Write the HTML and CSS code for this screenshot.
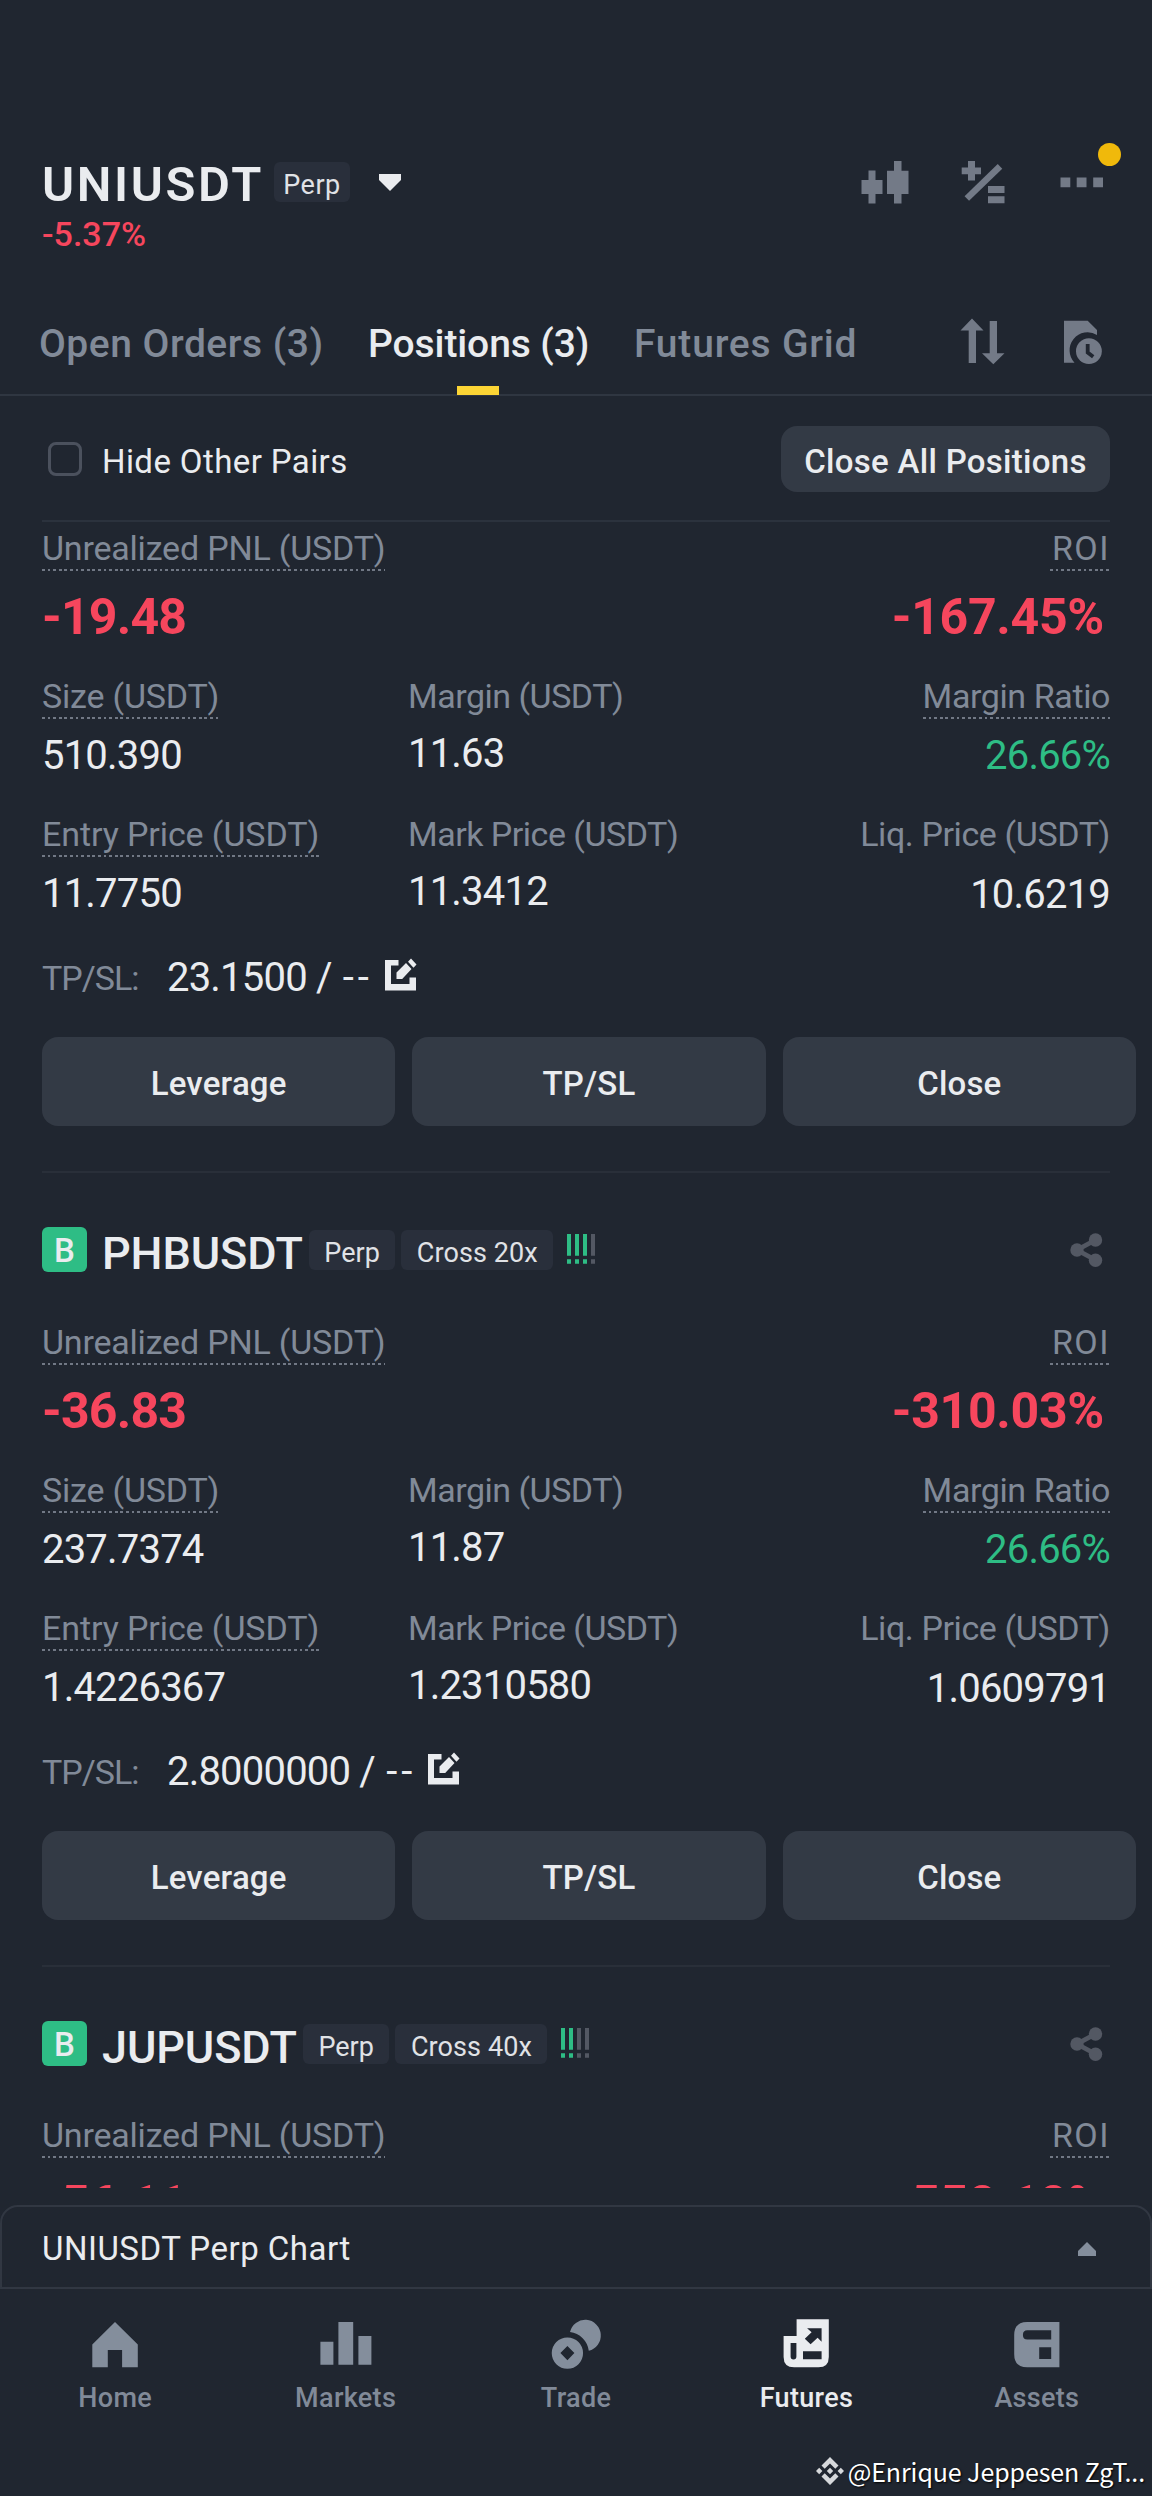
FILE: index.html
```html
<!DOCTYPE html>
<html lang="en">
<head>
<meta charset="utf-8">
<title>UNIUSDT Perp – Positions</title>
<link rel="stylesheet" href="styles.css">
</head>
<body>
<main class="app">
  <header class="header">
    <div class="pair-row">
      <h1 class="pair">UNIUSDT</h1>
      <span class="tag tag-top">Perp</span>
      <svg class="caret" width="22" height="17" viewBox="0 0 22 17"><path d="M0 0H22V6L11 17L0 6Z" fill="#eaecef"/></svg>
      <div class="header-icons">
        <svg width="48" height="44" viewBox="861 160 48 44" fill="#737a87"><path d="M868.5 170.5h7V180h7v14h-7v9.500h-7V194h-7v-14h7zM894 161h7.500v9.700h7V194h-7v9.500H894V194h-7v-23.300h7z"/></svg>
        <svg width="44" height="44" viewBox="961 160 44 44" fill="#737a87"><path d="M968 161h7v6.500h6v6.700h-6v6.300h-7v-6.300h-6.300v-6.700h6.300zM988 186h16.500v7H988zM988 196.300h16.500v7H988z"/><path d="M966.800 198.500L1000 166.300" stroke="#737a87" stroke-width="6.500"/></svg>
        <svg width="44" height="44" viewBox="1060 160 44 44" fill="#737a87"><path d="M1060.500 177.500h9.800v9.700h-9.800zM1076.700 177.500h9.800v9.700h-9.800zM1093.200 177.500h9.800v9.700h-9.800z"/></svg>
        <i class="notice"></i>
      </div>
    </div>
    <p class="change">-5.37%</p>
  </header>

  <nav class="tabs">
    <a class="tab tab-orders">Open Orders (3)</a>
    <a class="tab tab-active">Positions (3)</a>
    <a class="tab tab-grid">Futures Grid</a>
    <div class="tab-icons">
      <svg width="45" height="46" viewBox="960 318 45 46" fill="#737a87"><path d="M972 318.500L983.500 330.500H976V363h-7.300V330.500H960.500zM989.700 321h7.300v32.300h7.500L993.300 364.200L982 353.300h7.700z"/></svg>
      <svg width="39" height="46" viewBox="1063 318 39 46" fill="#737a87"><path d="M1064 320.700h23.700L1097 330v5A18 18 0 0 0 1074.500 362.700H1064z"/><circle cx="1088.900" cy="351.200" r="12.900"/><path d="M1087.700 344v8.500l5.500 4.200" fill="none" stroke="#202630" stroke-width="3.800"/></svg>
    </div>
  </nav>

  <section class="tools">
    <label class="hide-pairs"><span class="box"></span><span class="hide-text">Hide Other Pairs</span></label>
    <button class="close-all">Close All Positions</button>
  </section>

  <section class="positions">
    <article class="card">
      <div class="pnl">
        <div class="cell"><span class="label hint">Unrealized PNL (USDT)</span><b class="big">-19.48</b></div>
        <div class="cell end"><span class="label hint roi">ROI</span><b class="big pct">-167.45%</b></div>
      </div>
      <div class="stats">
        <div class="cell"><span class="label hint">Size (USDT)</span><span class="value">510.390</span></div>
        <div class="cell mid"><span class="label">Margin (USDT)</span><span class="value">11.63</span></div>
        <div class="cell end"><span class="label hint">Margin Ratio</span><span class="value green">26.66%</span></div>
        <div class="cell"><span class="label hint entry">Entry Price (USDT)</span><span class="value">11.7750</span></div>
        <div class="cell mid"><span class="label">Mark Price (USDT)</span><span class="value">11.3412</span></div>
        <div class="cell end low"><span class="label">Liq. Price (USDT)</span><span class="value">10.6219</span></div>
      </div>
      <div class="tpsl"><span class="label tp-label">TP/SL:</span><span class="value">23.1500 / <span class="none">--</span></span>
        <svg class="edit" width="32" height="33" viewBox="385 958 32 33" fill="#eaecef"><path d="M385 960h13.500v5.500H391V984h18.500v-6.500h6.500V990.500H385z"/><path d="M396.500 979v-6.500l9.500-9.500l5.500 6l-9.300 10zM408 961.800l3-3.300l5.500 6l-3 3.300z"/></svg>
      </div>
      <div class="actions"><button>Leverage</button><button>TP/SL</button><button>Close</button></div>
    </article>

    <article class="card">
      <div class="card-head">
        <span class="side">B</span><h2 class="symbol">PHBUSDT</h2><span class="tag">Perp</span><span class="tag">Cross 20x</span>
        <svg class="risk" width="28" height="30" viewBox="0 0 28 30" fill="#2ebd85"><path d="M0 0h4v21.700H0zM0 25.300h4v4.500H0zM8 0h4v21.700H8zM8 25.300h4v4.500H8zM16 0h4v21.700h-4zM16 25.300h4v4.500h-4z"/><path fill="#535863" d="M24 0h4v21.700h-4zM24 25.300h4v4.500h-4z"/></svg>
        <svg class="share" width="34" height="34" viewBox="0 0 34 34" fill="#535863"><path d="M25.500 7L7 17L25.500 27" fill="none" stroke="#535863" stroke-width="4.800"/><circle cx="25.500" cy="7" r="6.700"/><circle cx="7" cy="17" r="6.700"/><circle cx="25.500" cy="27.300" r="6.700"/></svg>
      </div>
      <div class="pnl">
        <div class="cell"><span class="label hint">Unrealized PNL (USDT)</span><b class="big">-36.83</b></div>
        <div class="cell end"><span class="label hint roi">ROI</span><b class="big pct">-310.03%</b></div>
      </div>
      <div class="stats">
        <div class="cell"><span class="label hint">Size (USDT)</span><span class="value">237.7374</span></div>
        <div class="cell mid"><span class="label">Margin (USDT)</span><span class="value">11.87</span></div>
        <div class="cell end"><span class="label hint">Margin Ratio</span><span class="value green">26.66%</span></div>
        <div class="cell"><span class="label hint entry">Entry Price (USDT)</span><span class="value">1.4226367</span></div>
        <div class="cell mid"><span class="label">Mark Price (USDT)</span><span class="value">1.2310580</span></div>
        <div class="cell end low"><span class="label">Liq. Price (USDT)</span><span class="value">1.0609791</span></div>
      </div>
      <div class="tpsl"><span class="label tp-label">TP/SL:</span><span class="value">2.8000000 / <span class="none">--</span></span>
        <svg class="edit" width="32" height="33" viewBox="385 958 32 33" fill="#eaecef"><path d="M385 960h13.500v5.500H391V984h18.500v-6.500h6.500V990.500H385z"/><path d="M396.500 979v-6.500l9.500-9.500l5.500 6l-9.300 10zM408 961.800l3-3.300l5.500 6l-3 3.300z"/></svg>
      </div>
      <div class="actions"><button>Leverage</button><button>TP/SL</button><button>Close</button></div>
    </article>

    <article class="card">
      <div class="card-head">
        <span class="side">B</span><h2 class="symbol">JUPUSDT</h2><span class="tag">Perp</span><span class="tag">Cross 40x</span>
        <svg class="risk" width="28" height="30" viewBox="0 0 28 30" fill="#2ebd85"><path d="M0 0h4v21.700H0zM0 25.300h4v4.500H0zM8 0h4v21.700H8zM8 25.300h4v4.500H8z"/><path fill="#535863" d="M16 0h4v21.700h-4zM16 25.300h4v4.500h-4zM24 0h4v21.700h-4zM24 25.300h4v4.500h-4z"/></svg>
        <svg class="share" width="34" height="34" viewBox="0 0 34 34" fill="#535863"><path d="M25.500 7L7 17L25.500 27" fill="none" stroke="#535863" stroke-width="4.800"/><circle cx="25.500" cy="7" r="6.700"/><circle cx="7" cy="17" r="6.700"/><circle cx="25.500" cy="27.300" r="6.700"/></svg>
      </div>
      <div class="pnl">
        <div class="cell"><span class="label hint">Unrealized PNL (USDT)</span><b class="big">-56.11</b></div>
        <div class="cell end"><span class="label hint roi">ROI</span><b class="big pct">-558.18%</b></div>
      </div>
    </article>
  </section>

  <section class="chart-bar">
    <span class="chart-title">UNIUSDT Perp Chart</span>
    <svg width="18" height="14" viewBox="0 0 18 14"><path d="M0 14V9L9 0L18 9V14Z" fill="#848e9c"/></svg>
  </section>

  <nav class="bottom">
    <a class="item"><svg width="60" height="50" viewBox="85.200 2318 60 50" fill="#848e9c"><path d="M92.500 2344.500L115.200 2322L138 2344.500V2367.300H122.300V2350H108V2367.300H92.500z"/></svg><span>Home</span></a>
    <a class="item"><svg width="60" height="50" viewBox="315.600 2318 60 50" fill="#848e9c"><path d="M320 2341.700h13v23h-13zM338 2322h14.800v42.700H338zM358 2336h13v28.700h-13z"/></svg><span>Markets</span></a>
    <a class="item"><svg width="60" height="50" viewBox="546 2318 60 50" fill="#848e9c"><path fill-rule="evenodd" d="M567.400 2337.400a15.600 15.700 0 1 1 0 31.400a15.600 15.700 0 1 1 0-31.400zM567.400 2346l-7 7.100l7 7.100l7-7.100z"/><path d="M570 2332A15.600 15.700 0 1 1 588.800 2350.800A21.500 21.500 0 0 0 570 2332z"/></svg><span>Trade</span></a>
    <a class="item item-active"><svg width="60" height="50" viewBox="776.400 2318 60 50" fill="#eaecef"><path fill-rule="evenodd" d="M797 2319.300h32.200V2357q0 10.300-10.300 10.300H794.500q-10.500 0-10.500-10.300V2336h13zM791 2343h5.800v13.500q0 3-2.900 3t-2.900-3zM803.400 2351.200H822v8H803.400zM807.500 2328.200h14.500v13.500l-4-4l-7 6.600l-5.800-5.500l6.800-6.600z"/></svg><span>Futures</span></a>
    <a class="item"><svg width="60" height="50" viewBox="1006.800 2318 60 50" fill="#848e9c"><path fill-rule="evenodd" d="M1027 2322h32.200v45.300H1027q-13 0-13-13v-19.300q0-13 13-13zM1027.200 2330.300q-4.500 0-4.500 4.600t4.500 4.600H1051v-9.200zM1039 2347.300h12V2359h-12z"/></svg><span>Assets</span></a>
  </nav>

  <footer class="credit">
    <svg width="28" height="28" viewBox="0 0 28 28" fill="#d6d8db"><path d="M14 0L22.500 8.500L19.300 11.700L14 6.400L8.700 11.700L5.500 8.500zM14 28L22.500 19.500L19.300 16.300L14 21.600L8.700 16.300L5.500 19.500zM3.200 10.800L6.400 14L3.200 17.200L0 14zM24.800 10.800L28 14L24.800 17.200L21.600 14zM14 10.800L17.200 14L14 17.200L10.800 14z"/></svg>
    <span>@Enrique Jeppesen ZgT...</span>
  </footer>
</main>
</body>
</html>
```
FILE: styles.css
```css
* { box-sizing: border-box; margin: 0; padding: 0; }
body { background: #202630; color: #eaecef; font-family: Roboto, sans-serif; }
svg { display: block; flex: none; overflow: visible; }
button { border: 0; background: #333a45; color: #eaecef; font: 500 33px/40px Roboto, sans-serif; border-radius: 16px; }

.app { width: 1152px; height: 2496px; display: flex; flex-direction: column; overflow: hidden; }

.header { height: 292px; padding: 160px 48px 0 42px; flex: none; }
.pair-row { display: flex; height: 48px; }
.pair { font-size: 49px; line-height: 49px; font-weight: 600; letter-spacing: 2.600px; width: 232px; }
.tag { background: #292f3b; border-radius: 6px; height: 40px; font-size: 27px; line-height: 46px; color: #e0e2e6; }
.tag-top { margin-top: 2px; width: 76px; text-align: center; letter-spacing: .5px; }
.caret { margin: 14px 0 0 29px; }
.header-icons { margin-left: auto; display: flex; gap: 52px; position: relative; }
.header-icons svg:last-of-type { margin-left: 3px; }
.notice { position: absolute; top: -17px; right: -17px; width: 23px; height: 23px; border-radius: 50%; background: #f0b90b; }
.change { margin-top: 8px; font-size: 34px; line-height: 36px; font-weight: 500; color: #f6465d; }

.tabs { height: 104px; flex: none; border-bottom: 2px solid #2f3641; display: flex; align-items: center; padding: 2px 50px 0 39px; color: #818a98; }
.tab { font-size: 39px; line-height: 102px; font-weight: 500; letter-spacing: .5px; white-space: nowrap; }
.tab-orders { width: 329px; }
.tab-active { width: 221px; letter-spacing: -.1px; color: #eaecef; position: relative; }
.tab-active::after { content: ""; position: absolute; left: 89px; bottom: 0; width: 42px; height: 9px; background: #fcd535; }
.tab-grid { margin-left: 45px; letter-spacing: .8px; }
.tab-icons { display: flex; gap: 58px; margin: -6px 0 0 auto; }

.tools { height: 98px; flex: none; margin: 28px 42px 0; padding: 2px 0 28px; display: flex; justify-content: space-between; border-bottom: 2px solid #2b323d; }
.hide-pairs { display: flex; padding-left: 6px; }
.box { width: 34px; height: 34px; margin-top: 16px; border: 3px solid #4b515d; border-radius: 8px; }
.hide-text { font-size: 33px; line-height: 72px; margin-left: 20px; letter-spacing: .4px; }
.close-all { width: 329px; height: 66px; padding-top: 6px; letter-spacing: .3px; }

.positions { height: 1666px; flex: none; overflow: hidden; padding: 0 42px; }
.card { border-bottom: 2px solid #292f39; padding-bottom: 45px; }
.card:first-child { padding-top: 6px; }
.card-head { display: flex; padding-top: 54px; height: 148.600px; }
.side { width: 45px; height: 45px; border-radius: 6px; background: #2ebd85; text-align: center; font-size: 33px; line-height: 47px; font-weight: 500; }
.symbol { margin: 4px 6px 0 15px; font-size: 45px; line-height: 46px; font-weight: 500; letter-spacing: -.1px; }
.card-head .tag { margin: 3px 6px 0 0; padding: 0 15.500px; }
.card-head .tag + .tag { letter-spacing: .1px; }
.risk { margin: 7px 0 0 8px; }
.share { margin: 6px 6px 0 auto; }
.cell { display: flex; flex-direction: column; align-items: flex-start; }
.end { align-items: flex-end; }
.pnl { display: flex; justify-content: space-between; }
.label { height: 43px; font-size: 34px; line-height: 40px; letter-spacing: -.2px; color: #818a98; white-space: nowrap; }
.hint { background: repeating-linear-gradient(90deg, #717885 0 2.800px, transparent 2.800px 5.600px) 0 41px / 100% 2px no-repeat; }
.roi { letter-spacing: 1.500px; padding-left: 2px; }
.entry { letter-spacing: -.1px; }
.mid .label { letter-spacing: -.5px; }
.end .label:not(.roi) { letter-spacing: -.4px; }
.big { margin-top: 21px; font-size: 50px; line-height: 50px; font-weight: 700; letter-spacing: -.800px; color: #f6465d; margin-bottom: -1px; }
.pct { margin-right: 6px; letter-spacing: -.300px; }
.stats { display: grid; grid-template-columns: 366px 1fr 1fr; row-gap: 39px; margin-top: 35px; }
.value { margin: 17px 0 -1px; font-size: 40px; line-height: 40px; letter-spacing: -.8px; white-space: nowrap; }
.mid .value { margin-top: 15px; }
.low .value { margin-top: 18px; margin-bottom: -2px; }
.green { color: #2ebd85; }
.tpsl { display: flex; height: 40px; margin-top: 45px; }
.tpsl .label { width: 125px; letter-spacing: -1px; }
.tpsl .value { margin: 0; }
.none { letter-spacing: 4px; margin-left: 2px; }
.edit { margin-left: 12px; }
.actions { display: flex; gap: 17px; margin: 39px -26px 0 0; }
.actions button { flex: 1; height: 89px; padding-top: 5px; letter-spacing: .2px; }

.chart-bar { margin-top: 17px; height: 84px; flex: none; border: 2px solid #313742; border-radius: 18px 18px 0 0; display: flex; justify-content: space-between; align-items: center; padding: 4px 54px 0 40px; }
.chart-title { font-size: 33px; line-height: 40px; letter-spacing: .5px; }

.bottom { display: flex; height: 150px; flex: none; padding-top: 29px; color: #818a98; }
.item { flex: 1; display: flex; flex-direction: column; align-items: center; font-size: 27px; line-height: 32px; font-weight: 500; letter-spacing: .3px; }
.item span { margin-top: 14px; }
.item-active { color: #eaecef; }

.credit { display: flex; justify-content: flex-end; gap: 4px; padding: 18px 7px 0 0; font: 25px/28px "Noto Sans CJK SC", sans-serif; letter-spacing: -.1px; color: #fff; text-shadow: 1px 1px 2px #000; }
```
